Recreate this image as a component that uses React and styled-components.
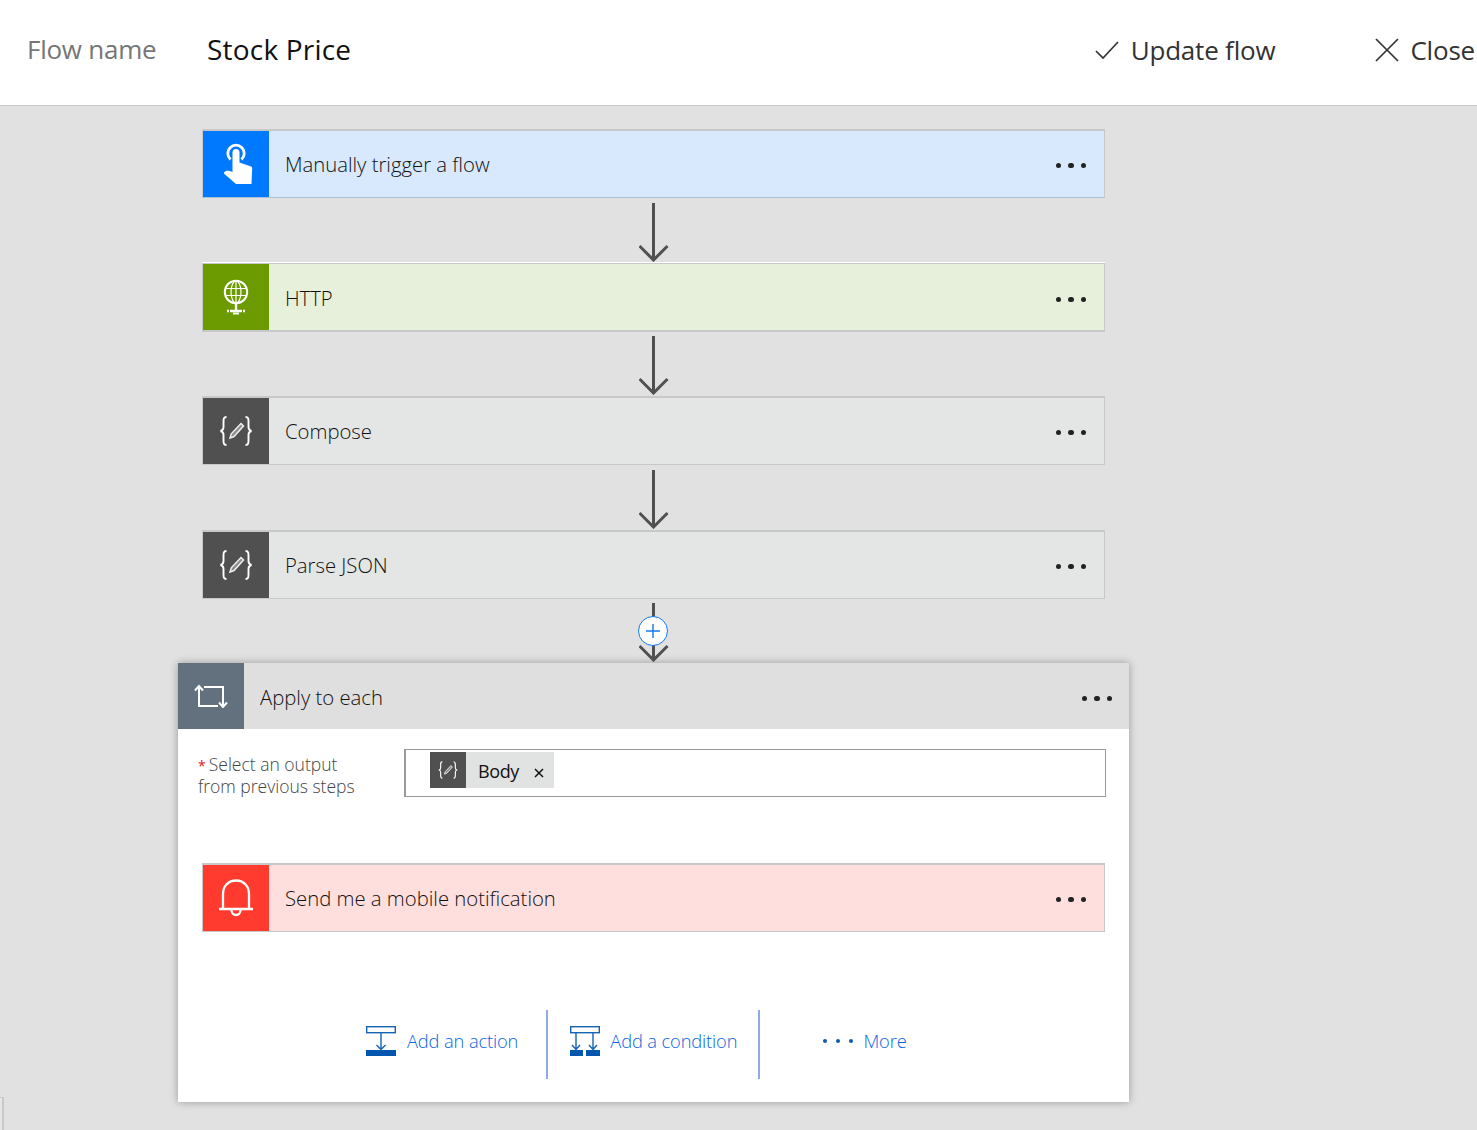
import React from "react";
import styled, { createGlobalStyle } from "styled-components";

const Global = createGlobalStyle`
  html, body { margin: 0; padding: 0; height: 100%; }
  body {
    background: #e1e1e1;
    font-family: "Open Sans", "Noto Sans", "Liberation Sans", sans-serif;
    overflow: hidden;
  }
`;

const Page = styled.div`
  position: relative;
  height: 1130px;
  overflow: hidden;
`;

const Header = styled.header`
  display: flex;
  align-items: center;
  height: 97px;
  padding-bottom: 8px;
  background: #fff;
  border-bottom: 1px solid #c8c8c8;
  white-space: nowrap;
`;

const FlowLabel = styled.span`
  width: 180px;
  margin-left: 27px;
  font-size: 26px;
  color: #767676;
  letter-spacing: -0.25px;
`;

const FlowName = styled.span`
  flex: 1;
  font-size: 28px;
  color: #111;
  letter-spacing: 0.2px;
`;

const HeaderAction = styled.button`
  display: flex;
  align-items: center;
  gap: ${(p) => p.$gap}px;
  margin: 2px ${(p) => p.$right}px 0 0;
  padding: 0;
  border: 0;
  background: none;
  font: inherit;
  font-size: 26px;
  letter-spacing: -0.2px;
  color: #333;
`;

const Flow = styled.main`
  display: flex;
  flex-direction: column;
  align-items: center;
  width: 951px;
  margin-left: 178px;
  padding-top: 23px;
`;

const Card = styled.div`
  display: flex;
  align-items: stretch;
  flex: none;
  width: 903px;
  height: 69px;
  box-sizing: border-box;
  background: ${(p) => p.$tint};
  border: 1px solid #c8c8c8;
  border-top-width: ${(p) => (p.$lit ? 1 : 2)}px;
  border-bottom: ${(p) => (p.$lit ? 2 : 1)}px solid ${(p) => p.$edge || "#c8c8c8"};
  ${(p) => p.$lit && "box-shadow: 0 -1px 0 #fff;"}
`;

const IconBox = styled.div`
  display: flex;
  align-items: center;
  justify-content: center;
  flex: none;
  width: 66px;
  background: ${(p) => p.$color};
`;

const CardTitle = styled.div`
  flex: 1;
  align-self: center;
  margin: ${(p) => (p.$drop ? 1 : 0)}px 0 0 16px;
  font-size: 20.300px;
  font-weight: 300;
  color: #111;
`;

const Dots = styled.div`
  display: flex;
  align-self: center;
  gap: 7px;
  margin: ${(p) => (p.$drop ? 5 : 3)}px ${(p) => p.$right || 18}px 0 0;

  i {
    width: 5.500px;
    height: 5.500px;
    border-radius: 50%;
    background: #222;
  }
`;

const Connector = styled.div`
  position: relative;
  flex: none;
  height: ${(p) => p.$height}px;

  svg {
    display: block;
    margin-top: ${(p) => p.$offset}px;
  }
`;

const PlusButton = styled.span`
  position: absolute;
  top: 17px;
  left: -0.5px;
  display: flex;
  align-items: center;
  justify-content: center;
  width: 30px;
  height: 30px;
  box-sizing: border-box;
  border: 1.500px solid #0f78ef;
  border-radius: 50%;
  background: #fff;

  svg {
    margin: 0;
  }
`;

const Loop = styled.section`
  flex: none;
  width: 951px;
  height: 439px;
  background: #fff;
  box-shadow: 0 0 8px rgba(0, 0, 0, 0.32);
`;

const LoopHead = styled.div`
  display: flex;
  align-items: stretch;
  height: 66px;
  background: #dfdfdf;
`;

const OutputRow = styled.div`
  display: flex;
  align-items: stretch;
  height: 48px;
  margin-top: 20px;
  padding: 0 23px 0 20px;
`;

const OutputLabel = styled.div`
  width: 206px;
  flex: none;
  padding-top: 4px;
  font-size: 17.500px;
  font-weight: 300;
  line-height: 22px;
  color: #444;

  b {
    font-size: 14px;
    line-height: 0;
    font-weight: 400;
    color: #e81123;
    margin-right: 3px;
  }
`;

const OutputInput = styled.div`
  flex: 1;
  display: flex;
  align-items: flex-start;
  padding: 2px 0 0 24px;
  box-sizing: border-box;
  border: 1px solid #9a9a9a;
  border-left-width: 2px;
`;

const Token = styled.div`
  display: flex;
  align-items: center;
  height: 36px;
  width: 124px;
  padding-top: 1px;
  box-sizing: border-box;
  background: #e1e3e3;
  font-size: 18px;
  letter-spacing: -0.4px;
  color: #111;
`;

const TokenIcon = styled.div`
  display: flex;
  align-items: center;
  justify-content: center;
  align-self: stretch;
  width: 36px;
  margin: -1px 12px 0 0;
  background: #505050;
`;

const TokenClose = styled.span`
  display: flex;
  margin: 5px 0 0 15px;
`;

const InnerCard = styled.div`
  display: flex;
  justify-content: center;
  margin-top: 66px;
`;

const Footer = styled.div`
  display: flex;
  align-items: stretch;
  height: 69px;
  margin-top: 78px;
  padding-left: 188px;
`;

const FooterItem = styled.div`
  display: flex;
  align-items: center;
  gap: ${(p) => p.$gap}px;
  padding: 0 ${(p) => p.$right || 0}px 8px 0;
  font-size: 18.300px;
  font-weight: 300;
  letter-spacing: -0.12px;
  color: #0a66e0;
`;

const FooterRule = styled.div`
  flex: none;
  width: 2px;
  margin-right: ${(p) => p.$right}px;
  background: #8faae8;
`;

const Corner = styled.div`
  position: absolute;
  left: 0;
  bottom: 0;
  width: 2px;
  height: 32px;
  background: #e6e6e6;
  border-top: 1px solid #c8c8c8;
  border-right: 2px solid #c8c8c8;
`;

const MoreDots = styled.span`
  display: flex;
  gap: 9px;

  i {
    width: 4px;
    height: 4px;
    border-radius: 50%;
    background: #0f5cad;
  }
`;

const ThreeDots = ({ right, drop }) => (
  <Dots $right={right} $drop={drop}>
    <i />
    <i />
    <i />
  </Dots>
);

const CheckIcon = () => (
  <svg width="24" height="20" viewBox="0 0 24 20" fill="none" stroke="#333" strokeWidth="1.700">
    <path d="M1 11l7 7L23 2" />
  </svg>
);

const CloseIcon = () => (
  <svg width="24" height="24" viewBox="0 0 24 24" fill="none" stroke="#333" strokeWidth="1.700">
    <path d="M1 1l22 22M23 1L1 23" />
  </svg>
);

const TouchIcon = () => (
  <svg width="36" height="42" viewBox="-6 0 36 42" fill="#fff">
    <path d="M6.500 16.500A8.200 8.200 0 1 1 17.500 16.500" fill="none" stroke="#fff" strokeWidth="2.800" />
    <path d="M8.500 9.500a3.500 3.500 0 0 1 7 0V19.500L27 23.500c.8.300 1.200 1 1.200 1.800L27.500 41H12L.5 31c-.7-.6-.7-1.500 0-2l1.500-1c1-.5 4-.3 6.500 1z" />
  </svg>
);

const GlobeIcon = () => (
  <svg width="28" height="36" viewBox="0 0 28 36" fill="none" stroke="#fff">
    <circle cx="14" cy="13" r="11.200" strokeWidth="2" />
    <ellipse cx="14" cy="13" rx="5" ry="11" strokeWidth="1.200" />
    <path d="M3 9.500h22M3 16.500h22M14 2v22" strokeWidth="1.200" />
    <path d="M14 25v7" strokeWidth="2.400" />
    <path d="M5 32h18" strokeWidth="2.400" strokeDasharray="2 1 12 1 2" />
    <path d="M11 34.500h6" strokeWidth="2" />
  </svg>
);

const BracesIcon = ({ size = 34 }) => (
  <svg width={size} height={size} viewBox="0 0 34 34" fill="none" stroke="#fff" strokeWidth="1.900">
    <path d="M7.500 3C4.500 3 4.500 5 4.500 8v5c0 2-1 3.500-3 4 2 .5 3 2 3 4v5c0 3 0 5 3 5" />
    <path d="M26.500 3c3 0 3 2 3 5v5c0 2 1 3.500 3 4-2 .5-3 2-3 4v5c0 3 0 5-3 5" />
    <path d="M22 9.500l2.500 2.500-9.500 10.500-4 1.500 1.300-4.200z" fill="#8c8c8c" stroke="#eee" strokeWidth="1.500" />
  </svg>
);

const LoopIcon = () => (
  <svg width="34" height="24" viewBox="0 0 34 24" fill="none" stroke="#fff" strokeWidth="2">
    <path d="M5 3v19h19" />
    <path d="M10 3h19v19" />
    <path d="M1 6.500l4-4.500 4 4.500" />
    <path d="M25 18.500l4 4.500 4-4.500" />
  </svg>
);

const BellIcon = () => (
  <svg width="34" height="38" viewBox="0 0 34 38" fill="none" stroke="#fff" strokeWidth="2.300">
    <path d="M4 29V15C4 7 9.500 1.500 17 1.500S30 7 30 15v14" />
    <path d="M0 30h34" />
    <path d="M12.500 31c0 3 2 5 4.500 5s4.500-2 4.500-5" />
  </svg>
);

const ActionIcon = () => (
  <svg width="30" height="30" viewBox="0 0 30 30" fill="none" stroke="#1563b4" strokeWidth="1.400">
    <rect x="0.700" y="0.700" width="28.600" height="6" />
    <path d="M15 7v16M10.500 19l4.500 4.500 4.500-4.500" />
    <rect x="0" y="24" width="30" height="6" fill="#0057ad" stroke="none" />
  </svg>
);

const ConditionIcon = () => (
  <svg width="30" height="30" viewBox="0 0 30 30" fill="none" stroke="#1563b4" strokeWidth="1.400">
    <rect x="0.700" y="0.700" width="28.600" height="6" />
    <path d="M6 7v16M2 19l4 4.500 4-4.500M23 7v16M19 19l4 4.500 4-4.500" />
    <rect x="0" y="24" width="13" height="6" fill="#0057ad" stroke="none" />
    <rect x="16" y="24" width="14" height="6" fill="#0057ad" stroke="none" />
  </svg>
);

const Arrow = () => (
  <svg width="30" height="59" viewBox="0 0 30 59" fill="none" stroke="#505050" strokeWidth="3">
    <path d="M14.500 0v57M.5 43l14 14 14-14" />
  </svg>
);

const steps = [
  { title: "Manually trigger a flow", tint: "#d8e9fe", edge: "#a9c0d8", color: "#0079ff", icon: <TouchIcon />, gap: 65, offset: 5 },
  { title: "HTTP", tint: "#e7f0da", color: "#6b9b00", icon: <GlobeIcon />, lit: true, gap: 64, offset: 4 },
  { title: "Compose", tint: "#e4e6e6", color: "#505050", icon: <BracesIcon />, gap: 65, offset: 5 },
  { title: "Parse JSON", tint: "#e4e6e6", color: "#505050", icon: <BracesIcon /> },
];

export default function App() {
  return (
    <Page>
      <Global />
      <Header>
        <FlowLabel>Flow name</FlowLabel>
        <FlowName>Stock Price</FlowName>
        <HeaderAction $gap={12} $right={100}>
          <CheckIcon />
          Update flow
        </HeaderAction>
        <HeaderAction $gap={11} $right={2}>
          <CloseIcon />
          Close
        </HeaderAction>
      </Header>
      <Flow>
        {steps.map((s) => (
          <React.Fragment key={s.title}>
            <Card $tint={s.tint} $edge={s.edge} $lit={s.lit}>
              <IconBox $color={s.color}>{s.icon}</IconBox>
              <CardTitle $drop={s.lit}>{s.title}</CardTitle>
              <ThreeDots drop={s.lit} />
            </Card>
            {s.gap && (
              <Connector $height={s.gap} $offset={s.offset}>
                <Arrow />
              </Connector>
            )}
          </React.Fragment>
        ))}
        <Connector $height={64} $offset={4}>
          <Arrow />
          <PlusButton>
            <svg width="14" height="14" viewBox="0 0 14 14" stroke="#0f78ef" strokeWidth="1.400">
              <path d="M0 7h14M7 0v14" />
            </svg>
          </PlusButton>
        </Connector>
        <Loop>
          <LoopHead>
            <IconBox $color="#63707e">
              <LoopIcon />
            </IconBox>
            <CardTitle $drop>Apply to each</CardTitle>
            <ThreeDots right={17} drop />
          </LoopHead>
          <OutputRow>
            <OutputLabel>
              <b>*</b>Select an output
              <br />
              from previous steps
            </OutputLabel>
            <OutputInput>
              <Token>
                <TokenIcon>
                  <BracesIcon size={20} />
                </TokenIcon>
                Body
                <TokenClose>
                  <svg width="10" height="10" viewBox="0 0 10 10" stroke="#111" strokeWidth="1.500">
                    <path d="M1 1l8 8M9 1L1 9" />
                  </svg>
                </TokenClose>
              </Token>
            </OutputInput>
          </OutputRow>
          <InnerCard>
            <Card $tint="#ffdfdd">
              <IconBox $color="#ff3a2f">
                <BellIcon />
              </IconBox>
              <CardTitle>Send me a mobile notification</CardTitle>
              <ThreeDots />
            </Card>
          </InnerCard>
          <Footer>
            <FooterItem $gap={11} $right={28}>
              <ActionIcon />
              Add an action
            </FooterItem>
            <FooterRule $right={22} />
            <FooterItem $gap={10} $right={21}>
              <ConditionIcon />
              Add a condition
            </FooterItem>
            <FooterRule $right={63} />
            <FooterItem $gap={10}>
              <MoreDots>
                <i />
                <i />
                <i />
              </MoreDots>
              More
            </FooterItem>
          </Footer>
        </Loop>
      </Flow>
      <Corner />
    </Page>
  );
}
